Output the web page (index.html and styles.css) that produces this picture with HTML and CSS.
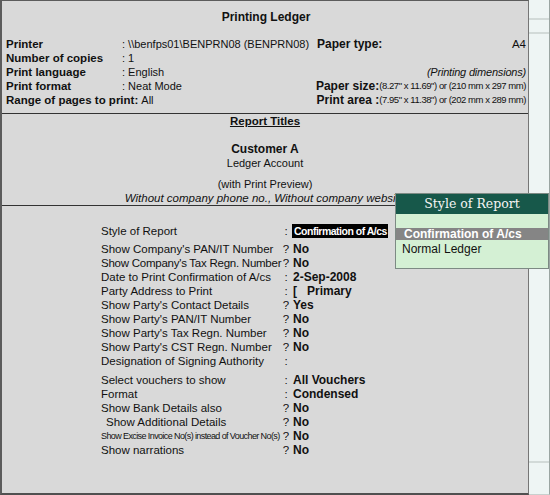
FILE: index.html
```html
<!DOCTYPE html>
<html>
<head>
<meta charset="utf-8">
<link rel="stylesheet" href="styles.css">
</head>
<body>
<div class="screen">
  <div class="panel">
    <div class="head">
      <div class="title">Printing Ledger</div>
      <div class="info">
        <div class="row">
          <div class="left"><span class="lbl">Printer</span><span class="val">: \\benfps01\BENPRN08 (BENPRN08)</span></div>
          <div class="right"><span class="rlbl">Paper type:</span><span class="rval">A4</span></div>
        </div>
        <div class="row">
          <div class="left"><span class="lbl">Number of copies</span><span class="val">: 1</span></div>
          <div class="right"></div>
        </div>
        <div class="row">
          <div class="left"><span class="lbl">Print language</span><span class="val">: English</span></div>
          <div class="right end"><span class="ital">(Printing dimensions)</span></div>
        </div>
        <div class="row">
          <div class="left"><span class="lbl">Print format</span><span class="val">: Neat Mode</span></div>
          <div class="right"><span class="rlbl">Paper size:</span><span class="cond">(8.27" x 11.69") or (210 mm x 297 mm)</span></div>
        </div>
        <div class="row">
          <div class="left"><span class="lbl">Range of pages to print:</span><span class="val">&nbsp;All</span></div>
          <div class="right"><span class="rlbl">Print area :</span><span class="cond">(7.95" x 11.38") or (202 mm x 289 mm)</span></div>
        </div>
      </div>
    </div>
    <div class="titles">
      <div class="rt">Report Titles</div>
      <div class="cust">Customer A</div>
      <div class="line">Ledger Account</div>
      <div class="line gap">(with Print Preview)</div>
      <div class="line it">Without company phone no., Without company website</div>
    </div>
    <div class="form">
      <div class="frow first"><span class="flbl">Style of Report</span><span class="sep">:</span><span class="sel">Confirmation of A/cs</span></div>
      <div class="frow"><span class="flbl">Show Company's PAN/IT Number</span><span class="sep">?</span><span class="fval">No</span></div>
      <div class="frow"><span class="flbl tight">Show Company's Tax Regn. Number</span><span class="sep">?</span><span class="fval">No</span></div>
      <div class="frow"><span class="flbl">Date to Print Confirmation of A/cs</span><span class="sep">:</span><span class="fval">2-Sep-2008</span></div>
      <div class="frow"><span class="flbl">Party Address to Print</span><span class="sep">:</span><span class="fval">[&nbsp;&nbsp; Primary</span></div>
      <div class="frow"><span class="flbl">Show Party's Contact Details</span><span class="sep">?</span><span class="fval">Yes</span></div>
      <div class="frow"><span class="flbl">Show Party's PAN/IT Number</span><span class="sep">?</span><span class="fval">No</span></div>
      <div class="frow"><span class="flbl">Show Party's Tax Regn. Number</span><span class="sep">?</span><span class="fval">No</span></div>
      <div class="frow"><span class="flbl">Show Party's CST Regn. Number</span><span class="sep">?</span><span class="fval">No</span></div>
      <div class="frow"><span class="flbl">Designation of Signing Authority</span><span class="sep">:</span><span class="fval"></span></div>
      <div class="frow group"><span class="flbl">Select vouchers to show</span><span class="sep">:</span><span class="fval">All Vouchers</span></div>
      <div class="frow"><span class="flbl">Format</span><span class="sep">:</span><span class="fval">Condensed</span></div>
      <div class="frow"><span class="flbl">Show Bank Details also</span><span class="sep">?</span><span class="fval">No</span></div>
      <div class="frow"><span class="flbl indent">Show Additional Details</span><span class="sep">?</span><span class="fval">No</span></div>
      <div class="frow"><span class="flbl tiny">Show Excise Invoice No(s) instead of Voucher No(s)</span><span class="sep">?</span><span class="fval">No</span></div>
      <div class="frow"><span class="flbl">Show narrations</span><span class="sep">?</span><span class="fval">No</span></div>
    </div>
  </div>
  <div class="strip">
    <div class="s1"></div>
    <div class="s2"></div>
    <div class="s3"></div>
  </div>
  <div class="popup">
    <div class="phead">Style of Report</div>
    <div class="pbody">
      <div class="pitem active">Confirmation of A/cs</div>
      <div class="pitem">Normal Ledger</div>
    </div>
  </div>
</div>
</body>
</html>
```

FILE: styles.css
```css
* { box-sizing: border-box; }
html, body { margin: 0; padding: 0; }
body {
  width: 550px;
  height: 495px;
  overflow: hidden;
  font-family: "Liberation Sans", Arial, sans-serif;
  font-size: 11.5px;
  color: #111;
  background: #eef5f4;
}
.screen {
  position: relative;
  display: flex;
  width: 550px;
  height: 495px;
}
.panel {
  width: 529px;
  height: 495px;
  background: #d9d9d9;
  border-left: 2px solid #5c5c5c;
  border-top: 1px solid #5c5c5c;
  border-right: 1px solid #767676;
  border-bottom: 2px solid #505050;
  display: flex;
  flex-direction: column;
}
.strip {
  flex: 1;
  background: #eef5f4;
  border-right: 1px solid #9aa5a2;
  border-bottom: 1px solid #c8d0ce;
  display: flex;
  flex-direction: column;
}
.s1 { height: 20px; border-bottom: 2px solid #d2dad8; }
.s2 { height: 14px; border-bottom: 2px solid #d2dad8; }
.s3 { flex: 1; border-bottom: 2px solid #d2dad8; margin-bottom: 31px; }

.head {
  padding: 9px 2px 6px 4px;
  border-bottom: 1px solid #333;
}
.title {
  text-align: center;
  font-weight: bold;
  font-size: 12px;
  line-height: 14px;
  margin-bottom: 13px;
}
.row {
  display: flex;
  height: 14px;
  line-height: 14px;
}
.left { width: 311px; display: flex; white-space: nowrap; }
.lbl { font-weight: bold; min-width: 116px; }
.val { font-size: 11px; }
.right {
  flex: 1;
  display: flex;
  justify-content: space-between;
  white-space: nowrap;
}
.right.end { justify-content: flex-end; }
.rlbl { font-weight: bold; font-size: 12px; }
.rval { font-size: 11.5px; }
.ital { font-style: italic; font-size: 11px; letter-spacing: -0.2px; }
.cond { font-size: 9.5px; letter-spacing: -0.45px; }

.titles {
  text-align: center;
  border-bottom: 1px solid #333;
}
.rt {
  font-weight: bold;
  text-decoration: underline;
  line-height: 14px;
}
.cust {
  font-weight: bold;
  font-size: 12px;
  line-height: 14px;
  margin-top: 14px;
}
.line { line-height: 14px; font-size: 11px; }
.line.gap { margin-top: 7px; }
.line.it { font-style: italic; white-space: nowrap; font-size: 11.5px; }

.form {
  padding: 18px 0 0 99px;
}
.frow {
  display: flex;
  height: 14px;
  line-height: 14px;
  white-space: nowrap;
}
.frow.first { margin-bottom: 4px; }
.frow.group { margin-top: 5px; }
.flbl { width: 180px; }
.flbl.tight { letter-spacing: -0.25px; }
.flbl.indent { padding-left: 5px; }
.flbl.tiny { font-size: 9px; letter-spacing: -0.6px; }
.sep { width: 10px; text-align: center; margin-right: 1px; }
.fval { font-weight: bold; font-size: 12px; padding-left: 1px; }
.sel {
  background: #000;
  color: #fff;
  font-weight: bold;
  font-size: 10.5px;
  letter-spacing: -0.5px;
  width: 96px;
  padding-left: 2px;
}

.popup {
  position: absolute;
  left: 395px;
  top: 193px;
  width: 154px;
  height: 76px;
  border: 1px solid #7d8a84;
  background: #d4f0d4;
}
.phead {
  background: #17584a;
  color: #f4f4f4;
  font-family: "DejaVu Serif", "Liberation Serif", serif;
  font-size: 12.5px;
  text-align: center;
  height: 20px;
  line-height: 19px;
}
.pbody { padding-top: 14px; }
.pitem {
  height: 12px;
  line-height: 12px;
  padding-left: 6px;
  font-size: 12px;
  white-space: nowrap;
  margin-bottom: 3px;
}
.pitem.active {
  background: #858585;
  color: #fff;
  font-weight: bold;
  padding-left: 8px;
}
```
